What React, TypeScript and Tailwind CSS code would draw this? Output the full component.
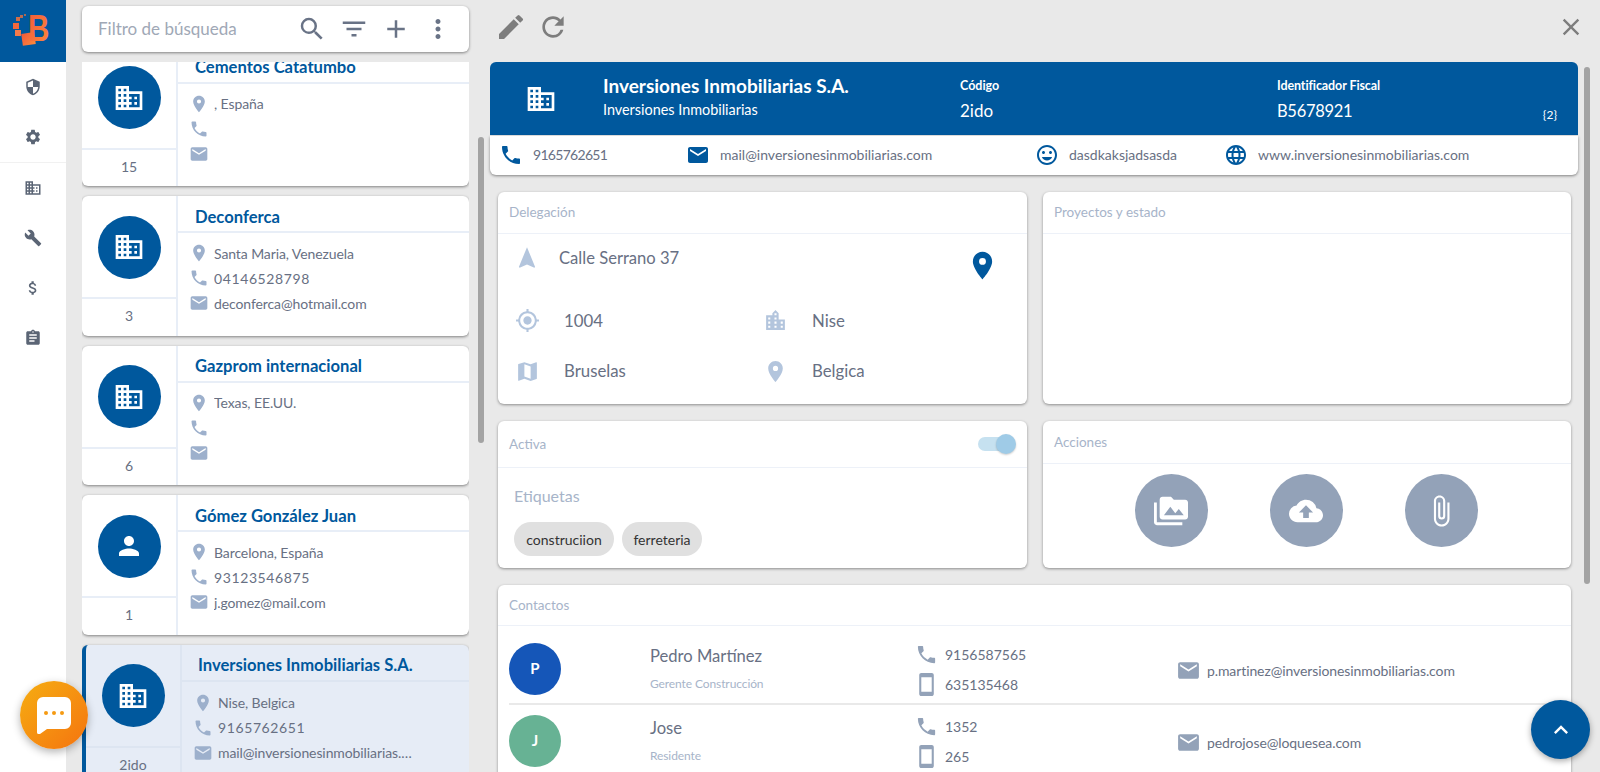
import React from "react";
import {
  MdBusiness, MdPhone, MdEmail, MdPlace, MdSearch, MdFilterList, MdAdd, MdMoreVert, MdEdit, MdRefresh, MdClose,
  MdSecurity, MdSettings, MdBuild, MdAttachMoney, MdAssignment, MdPerson, MdNavigation, MdMyLocation, MdLocationCity,
  MdMap, MdPermMedia, MdCloudUpload, MdAttachFile, MdStayCurrentPortrait, MdKeyboardArrowUp, MdTagFaces, MdLanguage,
} from "react-icons/md";

const font = "font-['Lato','Open_Sans',sans-serif]";

type Item = { name: string; place: string; phone: string; mail: string; count: string; person?: boolean; selected?: boolean };

const items: Item[] = [
  { name: "Cementos Catatumbo", place: ", España", phone: "", mail: "", count: "15" },
  { name: "Deconferca", place: "Santa Maria, Venezuela", phone: "04146528798", mail: "deconferca@hotmail.com", count: "3" },
  { name: "Gazprom internacional", place: "Texas, EE.UU.", phone: "", mail: "", count: "6" },
  { name: "Gómez González Juan", place: "Barcelona, España", phone: "93123546875", mail: "j.gomez@mail.com", count: "1", person: true },
  { name: "Inversiones Inmobiliarias S.A.", place: "Nise, Belgica", phone: "9165762651", mail: "mail@inversionesinmobiliarias.com", count: "2ido", selected: true },
];

function ListRow({ icon, text, tracking }: { icon: React.ReactNode; text: string; tracking: string }) {
  return (
    <div className="flex h-[25px] items-center">
      <span className="ml-[11px] flex w-[20px] justify-center text-[#9db0cc]">{icon}</span>
      <span className={`ml-[5px] w-[196px] truncate text-[14px] text-[#687083] ${tracking}`}>{text}</span>
    </div>
  );
}

function ListCard({ item }: { item: Item }) {
  const selected = item.selected;
  return (
    <div className={`flex h-[139.5px] shrink-0 overflow-hidden rounded-md shadow-[0_1px_3px_rgba(0,0,0,0.45)] ${selected ? "border-l-4 border-[#00589d] bg-[#e6ecf6]" : "bg-white"}`}>
      <div className={`flex w-[96px] shrink-0 flex-col border-r-2 ${selected ? "border-[#dde5f1]" : "border-[#e8eef7]"}`}>
        <div className="flex h-[101px] items-center justify-center pt-[1px]">
          <div className="flex h-[63px] w-[63px] items-center justify-center rounded-full bg-[#00589d] text-white">
            {item.person ? <MdPerson size={30} /> : <MdBusiness size={32} />}
          </div>
        </div>
        <div className={`flex flex-1 items-center justify-center border-t-2 pb-[3px] text-[14px] text-[#687083] ${selected ? "border-[#dde5f1]" : "border-[#e8eef7]"}`}>{item.count}</div>
      </div>
      <div className="min-w-0 flex-1">
        <div className={`flex h-[37px] items-center border-b-2 pt-[7px] text-[16.6px] font-bold text-[#00589d] ${selected ? "border-[#dde5f1] pl-[16px]" : "border-[#e8eef7] pl-[17px]"}`}>{item.name}</div>
        <div className={selected ? "pt-[8.5px]" : "pt-[7.5px]"}>
          <ListRow icon={<MdPlace size={20} />} text={item.place} tracking="tracking-[-0.1px]" />
          <ListRow icon={<MdPhone size={20} />} text={item.phone} tracking="tracking-[0.6px]" />
          <ListRow icon={<MdEmail size={20} />} text={item.mail} tracking="tracking-[-0.1px]" />
        </div>
      </div>
    </div>
  );
}

function InfoItem({ width, icon, text, tracking }: { width: string; icon: React.ReactNode; text: string; tracking: string }) {
  return (
    <div className={`flex items-center ${width}`}>
      <span className="text-[#00589d]">{icon}</span>
      <span className={`ml-[10px] text-[14px] text-[#687083] ${tracking}`}>{text}</span>
    </div>
  );
}

function Card({ className, children }: { className: string; children?: React.ReactNode }) {
  return <div className={`rounded-md bg-white shadow-[0_1px_3px_rgba(0,0,0,0.4)] ${className}`}>{children}</div>;
}

function CardHead({ title, height, children }: { title: string; height: string; children?: React.ReactNode }) {
  return (
    <div className={`flex items-center justify-between border-b border-[#edf1f8] pl-[11px] pr-[12px] text-[13.5px] text-[#a7b4c9] ${height}`}>
      <span>{title}</span>
      {children}
    </div>
  );
}

function Field({ icon, text, width, gap }: { icon: React.ReactNode; text: string; width: string; gap: string }) {
  return (
    <div className={`flex items-center ${width}`}>
      <span className="flex w-[28px] justify-center text-[#b3c5dd]">{icon}</span>
      <span className={`${gap} text-[16.8px] text-[#687083]`}>{text}</span>
    </div>
  );
}

function ActionButton({ children }: { children: React.ReactNode }) {
  return <div className="flex h-[73px] w-[73px] items-center justify-center rounded-full bg-[#93a2b8] text-white">{children}</div>;
}

function Contact({ initial, color, name, role, phone, mobile, mail, divider }: { initial: string; color: string; name: string; role: string; phone: string; mobile: string; mail: string; divider?: boolean }) {
  return (
    <div className={`flex h-[71px] items-center ${divider ? "border-b-2 border-[#e9e9e9]" : ""}`}>
      <div className={`flex h-[52px] w-[52px] shrink-0 items-center justify-center rounded-full text-[15px] font-bold text-white ${color}`}>{initial}</div>
      <div className="ml-[89px] w-[265px] shrink-0 pb-[1px]">
        <div className="text-[16.6px] leading-[22px] text-[#687083]">{name}</div>
        <div className="mt-[9px] text-[12px] leading-[16px] tracking-[-0.1px] text-[#a7b4c9]">{role}</div>
      </div>
      <div className="w-[261px] shrink-0 pt-[1px]">
        <div className="flex h-[30px] items-center">
          <MdPhone size={23} className="text-[#93a2b8]" />
          <span className="ml-[7px] text-[14px] text-[#687083]">{phone}</span>
        </div>
        <div className="flex h-[30px] items-center">
          <MdStayCurrentPortrait size={25} className="-ml-[1px] text-[#93a2b8]" />
          <span className="ml-[6px] text-[14px] text-[#687083]">{mobile}</span>
        </div>
      </div>
      <div className="flex items-center pt-[4px]">
        <MdEmail size={25} className="text-[#93a2b8]" />
        <span className="ml-[6px] text-[14px] tracking-[-0.1px] text-[#687083]">{mail}</span>
      </div>
    </div>
  );
}

export default function App() {
  const nav1 = [MdSecurity, MdSettings];
  const nav2 = [MdBusiness, MdBuild, MdAttachMoney, MdAssignment];
  return (
    <div className={`relative flex h-[772px] w-[1600px] overflow-hidden bg-[#e9e9e9] ${font}`}>
      {/* sidebar */}
      <aside className="flex w-[66px] shrink-0 flex-col bg-white">
        <div className="flex h-[62px] items-center justify-center bg-[#00589d]">
          <svg width="66" height="62" viewBox="0 0 66 62">
            <defs>
              <linearGradient id="lg" x1="0" y1="0" x2="1" y2="1">
                <stop offset="0" stopColor="#f2583a" />
                <stop offset="1" stopColor="#fb8a3c" />
              </linearGradient>
            </defs>
            <rect x="13" y="23" width="6" height="6" fill="#f2683c" />
            <rect x="15" y="30" width="6" height="6" fill="#f47a4a" />
            <rect x="16" y="17" width="4" height="4" fill="#e8703f" opacity="0.9" />
            <rect x="20" y="15" width="3" height="3" fill="#e8703f" opacity="0.8" />
            <rect x="24" y="14" width="2" height="2" fill="#e8703f" opacity="0.7" />
            <rect x="22" y="33" width="13" height="12" fill="url(#lg)" transform="rotate(-8 28 39)" />
            <g transform="translate(28,41) scale(0.8,1)">
              <text x="0" y="0" fontFamily="Liberation Sans, sans-serif" fontWeight="700" fontSize="37" fill="url(#lg)">B</text>
            </g>
          </svg>
        </div>
        <div className="border-b border-[#f1f1f1]">
          {nav1.map((I, i) => (
            <div key={i} className="flex h-[50px] items-center justify-center text-[#5b6575]"><I size={18} /></div>
          ))}
        </div>
        {nav2.map((I, i) => (
          <div key={i} className="flex h-[50px] items-center justify-center text-[#5b6575]"><I size={18} /></div>
        ))}
      </aside>

      {/* list column */}
      <section className="flex w-[423px] shrink-0 flex-col pl-[16px] pr-[20px]">
        <div className="flex h-[62px] shrink-0 items-start pt-[6px]">
          <div className="flex h-[46px] w-full items-center rounded-md bg-white pl-[16px] text-[#697386] shadow-[0_1px_3px_rgba(0,0,0,0.45)]">
            <span className="w-[199px] text-[17px] text-[#a0a8b6]">Filtro de búsqueda</span>
            <MdSearch size={30} />
            <MdFilterList size={30} className="ml-[12px]" />
            <MdAdd size={30} className="ml-[12px]" />
            <MdMoreVert size={30} className="ml-[12px]" />
          </div>
        </div>
        <div className="min-h-0 flex-1 overflow-hidden">
          <div className="-mt-[15.5px] flex flex-col gap-[10px] pb-[4px]">
            {items.map((it) => <ListCard key={it.name} item={it} />)}
          </div>
        </div>
      </section>
      <div className="absolute left-[478px] top-[137px] h-[306px] w-[6px] rounded-full bg-[#a3a3a3]" />

      {/* detail */}
      <main className="flex min-w-0 flex-1 flex-col">
        <div className="flex h-[62px] shrink-0 items-center pl-[6px] pr-[15px] pb-[8px] text-[#7d7d7d]">
          <MdEdit size={32} />
          <MdRefresh size={32} className="ml-[10px]" />
          <MdClose size={28} className="ml-auto" />
        </div>
        <div className="ml-[1px] w-[1088px] shrink-0">
          <div className="flex h-[73px] items-center rounded-t-md bg-[#00589d] text-white">
            <div className="flex w-[113px] justify-center pr-[11px]"><MdBusiness size={32} /></div>
            <div className="w-[357px] pb-[2px]">
              <div className="text-[19px] font-bold leading-[23px]">Inversiones Inmobiliarias S.A.</div>
              <div className="mt-[2px] text-[14.4px] leading-[22px]">Inversiones Inmobiliarias</div>
            </div>
            <div className="w-[317px] pb-[1px] pt-[3px]">
              <div className="text-[12.5px] font-bold leading-[20px]">Código</div>
              <div className="mt-[3px] text-[17px] leading-[24px]">2ido</div>
            </div>
            <div className="flex-1 pb-[1px] pt-[3px]">
              <div className="text-[12.5px] font-bold leading-[20px] tracking-[-0.1px]">Identificador Fiscal</div>
              <div className="mt-[3px] text-[16.5px] leading-[24px] tracking-[-0.3px]">B5678921</div>
            </div>
            <div className="self-end pb-[11px] pr-[21px] text-[12px]">{"{2}"}</div>
          </div>
          <div className="mt-[1px] flex h-[39px] items-center rounded-b-md bg-white pb-[2px] pl-[9px] shadow-[0_1px_3px_rgba(0,0,0,0.45)]">
            <InfoItem width="w-[187px]" icon={<MdPhone size={24} />} text="9165762651" tracking="tracking-[-0.7px]" />
            <InfoItem width="w-[349px]" icon={<MdEmail size={24} />} text="mail@inversionesinmobiliarias.com" tracking="" />
            <InfoItem width="w-[189px]" icon={<MdTagFaces size={24} />} text="dasdkaksjadsasda" tracking="" />
            <InfoItem width="w-[300px]" icon={<MdLanguage size={24} />} text="www.inversionesinmobiliarias.com" tracking="" />
          </div>
        </div>

        <div className="min-h-0 flex-1 overflow-hidden px-[9px] pt-[17px]">
          <div className="grid w-[1073px] grid-cols-[529px_528px] gap-x-[16px] gap-y-[17px]">
            <Card className="h-[212px]">
              <CardHead title="Delegación" height="h-[42px]" />
              <div className="flex h-[62px] items-start justify-between pl-[15px] pr-[28px] pt-[11px]">
                <div className="flex items-center">
                  <span className="flex w-[28px] justify-center text-[#b3c5dd]"><MdNavigation size={26} /></span>
                  <span className="ml-[18px] text-[16.6px] text-[#687083]">Calle Serrano 37</span>
                </div>
                <MdPlace size={33} className="mt-[4px] text-[#00589d]" />
              </div>
              <div className="flex h-[49px] items-center pl-[15px]">
                <Field width="w-[248px]" gap="ml-[23px]" icon={<MdMyLocation size={25} />} text="1004" />
                <Field width="" gap="ml-[23px]" icon={<MdLocationCity size={25} />} text="Nise" />
              </div>
              <div className="flex h-[50px] items-center pl-[15px] pt-[2px]">
                <Field width="w-[248px]" gap="ml-[23px]" icon={<MdMap size={25} />} text="Bruselas" />
                <Field width="" gap="ml-[23px]" icon={<MdPlace size={25} />} text="Belgica" />
              </div>
            </Card>
            <Card className="h-[212px]">
              <CardHead title="Proyectos y estado" height="h-[42px]" />
            </Card>
            <Card className="h-[147px]">
              <CardHead title="Activa" height="h-[47px]">
                <div className="relative mr-[-1px] h-[20px] w-[38px]">
                  <div className="absolute left-0 top-[3px] h-[14px] w-[34px] rounded-full bg-[#c6e1f0]" />
                  <div className="absolute right-0 top-0 h-[20px] w-[20px] rounded-full bg-[#9fcbe7] shadow-[0_1px_2px_rgba(0,0,0,0.2)]" />
                </div>
              </CardHead>
              <div className="pl-[16px] pt-[16px] text-[16px] leading-[24px] text-[#a7b4c9]">Etiquetas</div>
              <div className="mt-[14px] flex gap-[8px] pl-[16px]">
                <span className="flex h-[34px] w-[100px] items-center justify-center rounded-full bg-[#e0e0e0] text-[14px] text-[#333333]">construciion</span>
                <span className="flex h-[34px] w-[80px] items-center justify-center rounded-full bg-[#e0e0e0] text-[14px] text-[#333333]">ferreteria</span>
              </div>
            </Card>
            <Card className="h-[147px]">
              <CardHead title="Acciones" height="h-[43px]" />
              <div className="flex justify-center gap-[62px] pr-[2px] pt-[10px]">
                <ActionButton><MdPermMedia size={34} /></ActionButton>
                <ActionButton><MdCloudUpload size={34} /></ActionButton>
                <ActionButton><MdAttachFile size={34} /></ActionButton>
              </div>
            </Card>
            <Card className="col-span-2 h-[300px]">
              <CardHead title="Contactos" height="h-[41px]" />
              <div className="pl-[11px] pt-[8px]">
                <Contact initial="P" color="bg-[#1556b8]" name="Pedro Martínez" role="Gerente Construcción" phone="9156587565" mobile="635135468" mail="p.martinez@inversionesinmobiliarias.com" divider />
                <Contact initial="J" color="bg-[#67b294]" name="Jose" role="Residente" phone="1352" mobile="265" mail="pedrojose@loquesea.com" />
              </div>
            </Card>
          </div>
        </div>
      </main>

      <div className="absolute left-[1584px] top-[67px] h-[517px] w-[6px] rounded-full bg-[#a3a3a3]" />

      {/* floating */}
      <div className="absolute left-[20px] top-[681px] flex h-[68px] w-[68px] items-center justify-center rounded-full bg-gradient-to-br from-[#f5ad12] to-[#f4730f] shadow-[0_3px_8px_rgba(0,0,0,0.3)]">
        <svg width="36" height="38" viewBox="0 0 36 38">
          <path d="M7 1h22a6 6 0 0 1 6 6v20a6 6 0 0 1-6 6H11l-7 5a2 2 0 0 1-3-2V7a6 6 0 0 1 6-6z" fill="#fff" />
          <circle cx="10" cy="17" r="2" fill="#f59a12" />
          <circle cx="18" cy="17" r="2" fill="#f59a12" />
          <circle cx="26" cy="17" r="2" fill="#f59a12" />
        </svg>
      </div>
      <div className="absolute left-[1531px] top-[700px] flex h-[59px] w-[59px] items-center justify-center rounded-full bg-[#00589d] text-white shadow-[0_2px_6px_rgba(0,0,0,0.35)]">
        <MdKeyboardArrowUp size={28} />
      </div>
    </div>
  );
}
